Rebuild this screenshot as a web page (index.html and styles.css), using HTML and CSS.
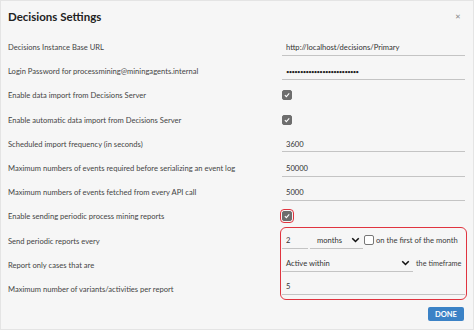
FILE: index.html
```html
<!DOCTYPE html>
<html lang="en">
<head>
    <meta charset="UTF-8">
    <meta name="viewport" content="width=device-width, initial-scale=1.0">
    <title>Decisions Settings</title>
    <link rel="stylesheet" href="styles.css">
</head>
<body>
    <div class="dialog">
        <div class="header">
            <h2>Decisions Settings</h2>
            <span class="close">&#x2715;</span>
        </div>

        <div class="settings">
            <div class="label">Decisions Instance Base URL</div>
            <div class="control"><input class="field" type="text" value="http://localhost/decisions/Primary"></div>

            <div class="label">Login Password for processmining@miningagents.internal</div>
            <div class="control"><input class="field" type="password" value="abcdefghijklmnopqrstuvwxyz"></div>

            <div class="label">Enable data import from Decisions Server</div>
            <div class="control"><span class="check on"><svg viewBox="0 0 10 10"><path d="M2.3 5.2 4.2 7.1 7.8 2.9"/></svg></span></div>

            <div class="label">Enable automatic data import from Decisions Server</div>
            <div class="control"><span class="check on"><svg viewBox="0 0 10 10"><path d="M2.3 5.2 4.2 7.1 7.8 2.9"/></svg></span></div>

            <div class="label">Scheduled import frequency (in seconds)</div>
            <div class="control"><input class="field" type="text" value="3600"></div>

            <div class="label">Maximum numbers of events required before serializing an event log</div>
            <div class="control"><input class="field" type="text" value="50000"></div>

            <div class="label">Maximum numbers of events fetched from every API call</div>
            <div class="control"><input class="field" type="text" value="5000"></div>

            <div class="label">Enable sending periodic process mining reports</div>
            <div class="control"><span class="check on marked"><svg viewBox="0 0 10 10"><path d="M2.3 5.2 4.2 7.1 7.8 2.9"/></svg></span></div>

            <div class="label">Send periodic reports every</div>
            <div class="report-group">
                <div class="control">
                    <input class="field short" type="text" value="2">
                    <div class="select months">
                        <span>months</span>
                        <svg class="chevron" viewBox="0 0 10 7"><path d="M1.2 1.4 5 5.2 8.8 1.4"/></svg>
                    </div>
                    <span class="check"></span>
                    <span class="text">on the first of the month</span>
                </div>
                <div class="control">
                    <div class="select cases">
                        <span>Active within</span>
                        <svg class="chevron" viewBox="0 0 10 7"><path d="M1.2 1.4 5 5.2 8.8 1.4"/></svg>
                    </div>
                    <span class="text">the timeframe</span>
                </div>
                <div class="control">
                    <input class="field" type="text" value="5">
                </div>
            </div>

            <div class="label">Report only cases that are</div>
            <div class="label">Maximum number of variants/activities per report</div>
        </div>

        <div class="footer">
            <button class="done">DONE</button>
        </div>
    </div>
</body>
</html>
```

FILE: styles.css
```css
body, html {
    margin: 0;
    padding: 0;
    background: #ffffff;
}

.dialog {
    width: 474px;
    height: 330px;
    box-sizing: border-box;
    background: #f6f6f6;
    border: 1px solid #e4e4e4;
    font-family: 'Lato', 'Liberation Sans', sans-serif;
    color: #3c3c3c;
}

.header {
    display: flex;
    justify-content: space-between;
    align-items: center;
    height: 30px;
    padding: 0 12px 0 7px;
}

.header h2 {
    margin: 0;
    font-size: 11.5px;
    font-weight: 700;
    color: #222222;
}

.close {
    font-size: 7px;
    color: #8a8a8a;
}

.settings {
    display: grid;
    grid-template-columns: 274px 183px;
    grid-auto-rows: 24.2px;
    padding: 4px 0 0 7px;
}

.label {
    display: flex;
    align-items: center;
    font-size: 7.6px;
    color: #454545;
}

.control {
    display: flex;
    align-items: center;
    height: 24.2px;
}

.field {
    width: 100%;
    height: 16px;
    margin-top: 1px;
    box-sizing: border-box;
    padding: 0 4px;
    border: none;
    border-bottom: 1px solid #c4c4c4;
    background: transparent;
    font-family: 'Lato', 'Liberation Sans', sans-serif;
    font-size: 7.6px;
    color: #333333;
    outline: none;
}

input[type="password"] {
    font-size: 6px;
    letter-spacing: -0.7px;
    color: #222222;
}

.field.short {
    width: 26px;
    flex: none;
    margin-right: 2px;
}

.check {
    flex: none;
    width: 10px;
    height: 10px;
    box-sizing: border-box;
    border: 1px solid #777777;
    border-radius: 2px;
    background: #ffffff;
}

.check.on {
    background: #6d6d6d;
    border-color: #6d6d6d;
}

.check svg {
    display: block;
    width: 8px;
    height: 8px;
}

.check svg path {
    fill: none;
    stroke: #ffffff;
    stroke-width: 1.3;
}

.check.marked {
    outline: 1.5px solid #e0343f;
    outline-offset: 1.5px;
    border-radius: 2px;
}

.report-group {
    grid-row: span 3;
    outline: 1.5px solid #e0343f;
    outline-offset: 1px;
    border-radius: 4px;
    margin-bottom: 3px;
}

.report-group .control {
    height: 23.2px;
}

.select {
    display: flex;
    justify-content: space-between;
    align-items: center;
    height: 16px;
    margin-top: 1px;
    box-sizing: border-box;
    padding: 0 2px 0 4px;
    border-bottom: 1px solid #c4c4c4;
    font-size: 7.6px;
    color: #333333;
}

.select.months {
    width: 53px;
    margin-right: 1px;
    padding-left: 7px;
}

.select.cases {
    width: 131px;
    margin-right: 2px;
}

.chevron {
    width: 9px;
    height: 6px;
    margin-right: 1px;
}

.chevron path {
    fill: none;
    stroke: #111111;
    stroke-width: 1.8;
}

.text {
    margin-left: 2px;
    font-size: 7.6px;
    color: #3c3c3c;
    white-space: nowrap;
}

.report-group .control:nth-child(2) .text {
    margin-left: 1px;
    font-size: 7.3px;
}

.footer {
    display: flex;
    justify-content: flex-end;
    padding: 6px 9px 0 0;
}

.done {
    width: 36px;
    height: 14px;
    padding: 0;
    border: none;
    border-radius: 2px;
    background: #3b82c6;
    color: #ffffff;
    font-family: 'Lato', 'Liberation Sans', sans-serif;
    font-size: 7.5px;
    font-weight: 700;
}
```
